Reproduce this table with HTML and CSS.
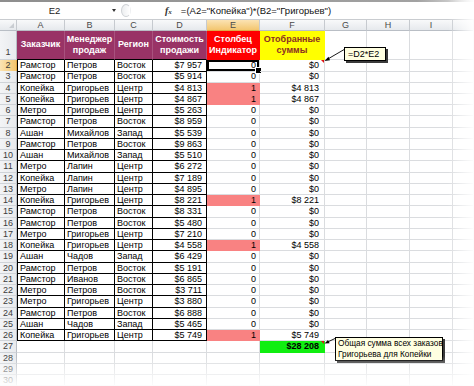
FILE: index.html
```html
<!DOCTYPE html>
<html lang="ru">
<head>
<meta charset="utf-8">
<title>Excel</title>
<link rel="stylesheet" href="styles.css">
</head>
<body>
<div class="app">
  <div class="strip"></div>
  <div class="fbar">
    <div class="namebox">E2</div>
    <div class="dd"></div>
    <div class="knob"></div>
    <div class="fx">f<span>x</span></div>
    <div class="formula">=(A2="Копейка")*(B2="Григорьев")</div>
  </div>
  <div class="sheet">
    <div class="row ch"><div class="corner"></div><div>A</div><div>B</div><div>C</div><div>D</div><div class="sel">E</div><div>F</div><div>G</div><div>H</div><div>I</div><div></div></div>
    <div class="row hd"><div class="rn">1</div><div class="m">Заказчик</div><div class="m">Менеджер<br>продаж</div><div class="m">Регион</div><div class="m">Стоимость<br>продажи</div><div class="red">Столбец<br>Индикатор</div><div class="yel">Отобранные<br>суммы</div><div></div><div></div><div></div><div></div></div>
    <div class="row d"><div class="rn sel">2</div><div>Рамстор</div><div>Петров</div><div>Восток</div><div>$7 957</div><div class="cur">0</div><div class="cm">$0</div><div></div><div></div><div></div><div></div></div>
    <div class="row d"><div class="rn">3</div><div>Рамстор</div><div>Петров</div><div>Восток</div><div>$5 914</div><div>0</div><div>$0</div><div></div><div></div><div></div><div></div></div>
    <div class="row d"><div class="rn">4</div><div>Копейка</div><div>Григорьев</div><div>Центр</div><div>$4 813</div><div class="hi">1</div><div>$4 813</div><div></div><div></div><div></div><div></div></div>
    <div class="row d"><div class="rn">5</div><div>Копейка</div><div>Григорьев</div><div>Центр</div><div>$4 867</div><div class="hi">1</div><div>$4 867</div><div></div><div></div><div></div><div></div></div>
    <div class="row d"><div class="rn">6</div><div>Метро</div><div>Григорьев</div><div>Центр</div><div>$5 263</div><div>0</div><div>$0</div><div></div><div></div><div></div><div></div></div>
    <div class="row d"><div class="rn">7</div><div>Рамстор</div><div>Петров</div><div>Восток</div><div>$8 959</div><div>0</div><div>$0</div><div></div><div></div><div></div><div></div></div>
    <div class="row d"><div class="rn">8</div><div>Ашан</div><div>Михайлов</div><div>Запад</div><div>$5 539</div><div>0</div><div>$0</div><div></div><div></div><div></div><div></div></div>
    <div class="row d"><div class="rn">9</div><div>Рамстор</div><div>Петров</div><div>Восток</div><div>$9 863</div><div>0</div><div>$0</div><div></div><div></div><div></div><div></div></div>
    <div class="row d"><div class="rn">10</div><div>Ашан</div><div>Михайлов</div><div>Запад</div><div>$5 510</div><div>0</div><div>$0</div><div></div><div></div><div></div><div></div></div>
    <div class="row d"><div class="rn">11</div><div>Метро</div><div>Лапин</div><div>Центр</div><div>$6 272</div><div>0</div><div>$0</div><div></div><div></div><div></div><div></div></div>
    <div class="row d"><div class="rn">12</div><div>Копейка</div><div>Лапин</div><div>Центр</div><div>$7 189</div><div>0</div><div>$0</div><div></div><div></div><div></div><div></div></div>
    <div class="row d"><div class="rn">13</div><div>Метро</div><div>Лапин</div><div>Центр</div><div>$4 895</div><div>0</div><div>$0</div><div></div><div></div><div></div><div></div></div>
    <div class="row d"><div class="rn">14</div><div>Копейка</div><div>Григорьев</div><div>Центр</div><div>$8 221</div><div class="hi">1</div><div>$8 221</div><div></div><div></div><div></div><div></div></div>
    <div class="row d"><div class="rn">15</div><div>Рамстор</div><div>Петров</div><div>Восток</div><div>$8 331</div><div>0</div><div>$0</div><div></div><div></div><div></div><div></div></div>
    <div class="row d"><div class="rn">16</div><div>Рамстор</div><div>Петров</div><div>Восток</div><div>$5 480</div><div>0</div><div>$0</div><div></div><div></div><div></div><div></div></div>
    <div class="row d"><div class="rn">17</div><div>Метро</div><div>Григорьев</div><div>Центр</div><div>$7 210</div><div>0</div><div>$0</div><div></div><div></div><div></div><div></div></div>
    <div class="row d"><div class="rn">18</div><div>Копейка</div><div>Григорьев</div><div>Центр</div><div>$4 558</div><div class="hi">1</div><div>$4 558</div><div></div><div></div><div></div><div></div></div>
    <div class="row d"><div class="rn">19</div><div>Ашан</div><div>Чадов</div><div>Запад</div><div>$6 429</div><div>0</div><div>$0</div><div></div><div></div><div></div><div></div></div>
    <div class="row d"><div class="rn">20</div><div>Рамстор</div><div>Петров</div><div>Восток</div><div>$5 191</div><div>0</div><div>$0</div><div></div><div></div><div></div><div></div></div>
    <div class="row d"><div class="rn">21</div><div>Рамстор</div><div>Иванов</div><div>Восток</div><div>$6 865</div><div>0</div><div>$0</div><div></div><div></div><div></div><div></div></div>
    <div class="row d"><div class="rn">22</div><div>Метро</div><div>Петров</div><div>Восток</div><div>$3 711</div><div>0</div><div>$0</div><div></div><div></div><div></div><div></div></div>
    <div class="row d"><div class="rn">23</div><div>Метро</div><div>Григорьев</div><div>Центр</div><div>$3 880</div><div>0</div><div>$0</div><div></div><div></div><div></div><div></div></div>
    <div class="row d"><div class="rn">24</div><div>Рамстор</div><div>Петров</div><div>Восток</div><div>$6 888</div><div>0</div><div>$0</div><div></div><div></div><div></div><div></div></div>
    <div class="row d"><div class="rn">25</div><div>Ашан</div><div>Чадов</div><div>Запад</div><div>$5 465</div><div>0</div><div>$0</div><div></div><div></div><div></div><div></div></div>
    <div class="row d"><div class="rn">26</div><div>Копейка</div><div>Григорьев</div><div>Центр</div><div>$5 749</div><div class="hi">1</div><div>$5 749</div><div></div><div></div><div></div><div></div></div>
    <div class="row e"><div class="rn">27</div><div></div><div></div><div></div><div></div><div></div><div class="tot cm">$28 208</div><div></div><div></div><div></div><div></div></div>
    <div class="row e"><div class="rn">28</div><div></div><div></div><div></div><div></div><div></div><div></div><div></div><div></div><div></div><div></div></div>
    <div class="row e"><div class="rn">29</div><div></div><div></div><div></div><div></div><div></div><div></div><div></div><div></div><div></div><div></div></div>
    <div class="row e"><div class="rn">30</div><div></div><div></div><div></div><div></div><div></div><div></div><div></div><div></div><div></div><div></div></div>
  </div>

  <svg class="arrows" width="474" height="386" viewBox="0 0 474 386">
    <line x1="345" y1="49" x2="327" y2="59.5" stroke="#000" stroke-width="0.9"/>
    <polygon points="324.5,61 328.5,56.8 330,60.2" fill="#000"/>
    <line x1="336" y1="338" x2="327" y2="342.3" stroke="#000" stroke-width="0.9"/>
    <polygon points="324.5,343.5 328,340 329.6,343.3" fill="#000"/>
  </svg>
  <div class="note n1">=D2*E2</div>
  <div class="note n2">Общая сумма всех заказов<br>Григорьева для Копейки</div>
  <div class="fade-r"></div>
  <div class="fade-b"></div>
</div>
</body>
</html>
```

FILE: styles.css
```css
* { box-sizing: border-box; }
html, body { margin: 0; padding: 0; background: #fff; }
body {
  font-family: "Liberation Sans", Arial, sans-serif;
  font-size: 9px;
  color: #000;
}
.app {
  position: relative;
  width: 474px;
  height: 386px;
  overflow: hidden;
  background: #fff;
}

/* top window edge */
.strip {
  height: 2px;
  background: linear-gradient(90deg, #8e8e8e, #a2a2a2 88%, #e6e6e6);
}

/* formula bar */
.fbar {
  display: flex;
  align-items: center;
  height: 18px;
  border-bottom: 1px solid #c9ccd0;
  font-size: 9.5px;
}
.namebox {
  width: 109px;
  text-align: center;
  color: #222;
}
.dd {
  width: 0;
  height: 0;
  border-left: 2.5px solid transparent;
  border-right: 2.5px solid transparent;
  border-top: 3px solid #333;
  margin-left: 3px;
}
.knob {
  width: 10px;
  height: 13px;
  margin-left: 5px;
  border: 1px solid #cfd2d6;
  border-right-color: transparent;
  border-radius: 50%;
  background: linear-gradient(90deg, #eceef0, #fff);
}
.fx {
  margin-left: 34px;
  font-family: "Liberation Serif", serif;
  font-style: italic;
  font-weight: bold;
  font-size: 10px;
  color: #333;
}
.fx span { font-size: 7px; }
.formula {
  margin-left: 9px;
  color: #111;
  white-space: nowrap;
}

/* sheet grid */
.row {
  display: grid;
  grid-template-columns: 17px 48px 50px 38px 54px 53px 65px 42px 43px 43px 1fr;
  height: 11.25px;
}
.row > div {
  border-right: 1px solid #dadcdf;
  border-bottom: 1px solid #dadcdf;
  padding: 0 2px;
  white-space: nowrap;
  overflow: hidden;
  line-height: 10.5px;
}

/* column header row */
.ch { height: 11px; }
.ch > div {
  background: linear-gradient(#f8f9fa, #e6e9ed);
  border-right-color: #c6cacf;
  border-bottom-color: #b9bec5;
  text-align: center;
  color: #4a4a4a;
  line-height: 10px;
}
.ch > div.sel {
  background: linear-gradient(#fbe3b3, #f3c66f);
  border-bottom-color: #e0a847;
}
.ch > .corner { position: relative; }
.ch > .corner::after {
  content: "";
  position: absolute;
  right: 2px;
  bottom: 2px;
  width: 0;
  height: 0;
  border-left: 5px solid transparent;
  border-bottom: 5px solid #c9cdd2;
}

/* row numbers */
.row > .rn {
  background: linear-gradient(90deg, #f3f4f6, #e8eaed);
  border-right-color: #b9bec5;
  border-bottom-color: #cfd3d8;
  text-align: center;
  color: #3c3c3c;
  padding: 0;
}
.row > .rn.sel {
  background: linear-gradient(90deg, #fbe3b3, #f3c66f);
  border-right-color: #e0a847;
}

/* title row */
.hd { height: 29px; }
.hd > div {
  display: flex;
  align-items: center;
  justify-content: center;
  text-align: center;
  white-space: normal;
  line-height: 11.5px;
  font-weight: bold;
}
.hd > .rn {
  align-items: flex-end;
  font-weight: normal;
  padding-bottom: 1px;
}
.hd > .m {
  background: #993366;
  color: #fff;
  border-right-color: #a9527e;
  border-bottom-color: #000;
}
.hd > .red {
  background: #ff0000;
  color: #fff;
  border-right-color: #ff0000;
  border-bottom-color: #ff0000;
}
.hd > .yel {
  background: #ffff00;
  color: #8a2f22;
  border-right-color: #ffff00;
  border-bottom-color: #ffff00;
}

/* data rows */
.d > div:nth-child(2),
.d > div:nth-child(3),
.d > div:nth-child(4),
.d > div:nth-child(5) {
  border-right-color: #000;
  border-bottom-color: #000;
}
.d > div:nth-child(2) { box-shadow: inset 1px 0 #000; padding-left: 3px; }
.d > div:nth-child(5) { text-align: right; padding-right: 4px; }
.d > div:nth-child(6) { text-align: right; padding-right: 3px; }
.d > div:nth-child(7),
.e > div:nth-child(7) { text-align: right; padding-right: 5px; }

.row > .hi {
  background: #f98282;
  border-right-color: #f98282;
  border-bottom-color: #f98282;
}
.row > .tot {
  background: #10ee10;
  border-right-color: #10ee10;
  border-bottom-color: #10ee10;
  font-weight: bold;
}

/* active cell E2 */
.row > .cur {
  position: relative;
  overflow: visible;
  box-shadow: inset 0 0 0 2px #000;
}
.row > .cur::after {
  content: "";
  position: absolute;
  right: -3px;
  bottom: -3px;
  width: 5px;
  height: 5px;
  background: #000;
  border: 1px solid #fff;
}

/* comment indicator */
.row > .cm { position: relative; }
.row > .cm::before {
  content: "";
  position: absolute;
  right: -1px;
  top: 0;
  width: 0;
  height: 0;
  border-left: 4px solid transparent;
  border-top: 4px solid #e01010;
}

/* comments */
.arrows {
  position: absolute;
  left: 0;
  top: 0;
  pointer-events: none;
}
.note {
  position: absolute;
  background: #ffffe1;
  border: 1px solid #000;
  box-shadow: 2px 2px 0 #3a3a3a;
  color: #000;
  font-size: 9px;
  white-space: nowrap;
}
.n1 {
  left: 344px;
  top: 47px;
  width: 42px;
  height: 14px;
  padding: 1px 0 0 3px;
  line-height: 11px;
}
.n2 {
  left: 335px;
  top: 337px;
  width: 108px;
  height: 24px;
  padding: 0 0 0 2px;
  font-size: 8.3px;
  line-height: 11px;
}

/* photo fade on the edges */
.fade-r {
  position: absolute;
  right: 0;
  top: 0;
  width: 26px;
  height: 100%;
  background: linear-gradient(90deg, rgba(255,255,255,0), rgba(255,255,255,0.95));
  pointer-events: none;
}
.fade-b {
  position: absolute;
  left: 0;
  bottom: 0;
  width: 100%;
  height: 30px;
  background: linear-gradient(rgba(255,255,255,0), rgba(255,255,255,0.92));
  pointer-events: none;
}
```
